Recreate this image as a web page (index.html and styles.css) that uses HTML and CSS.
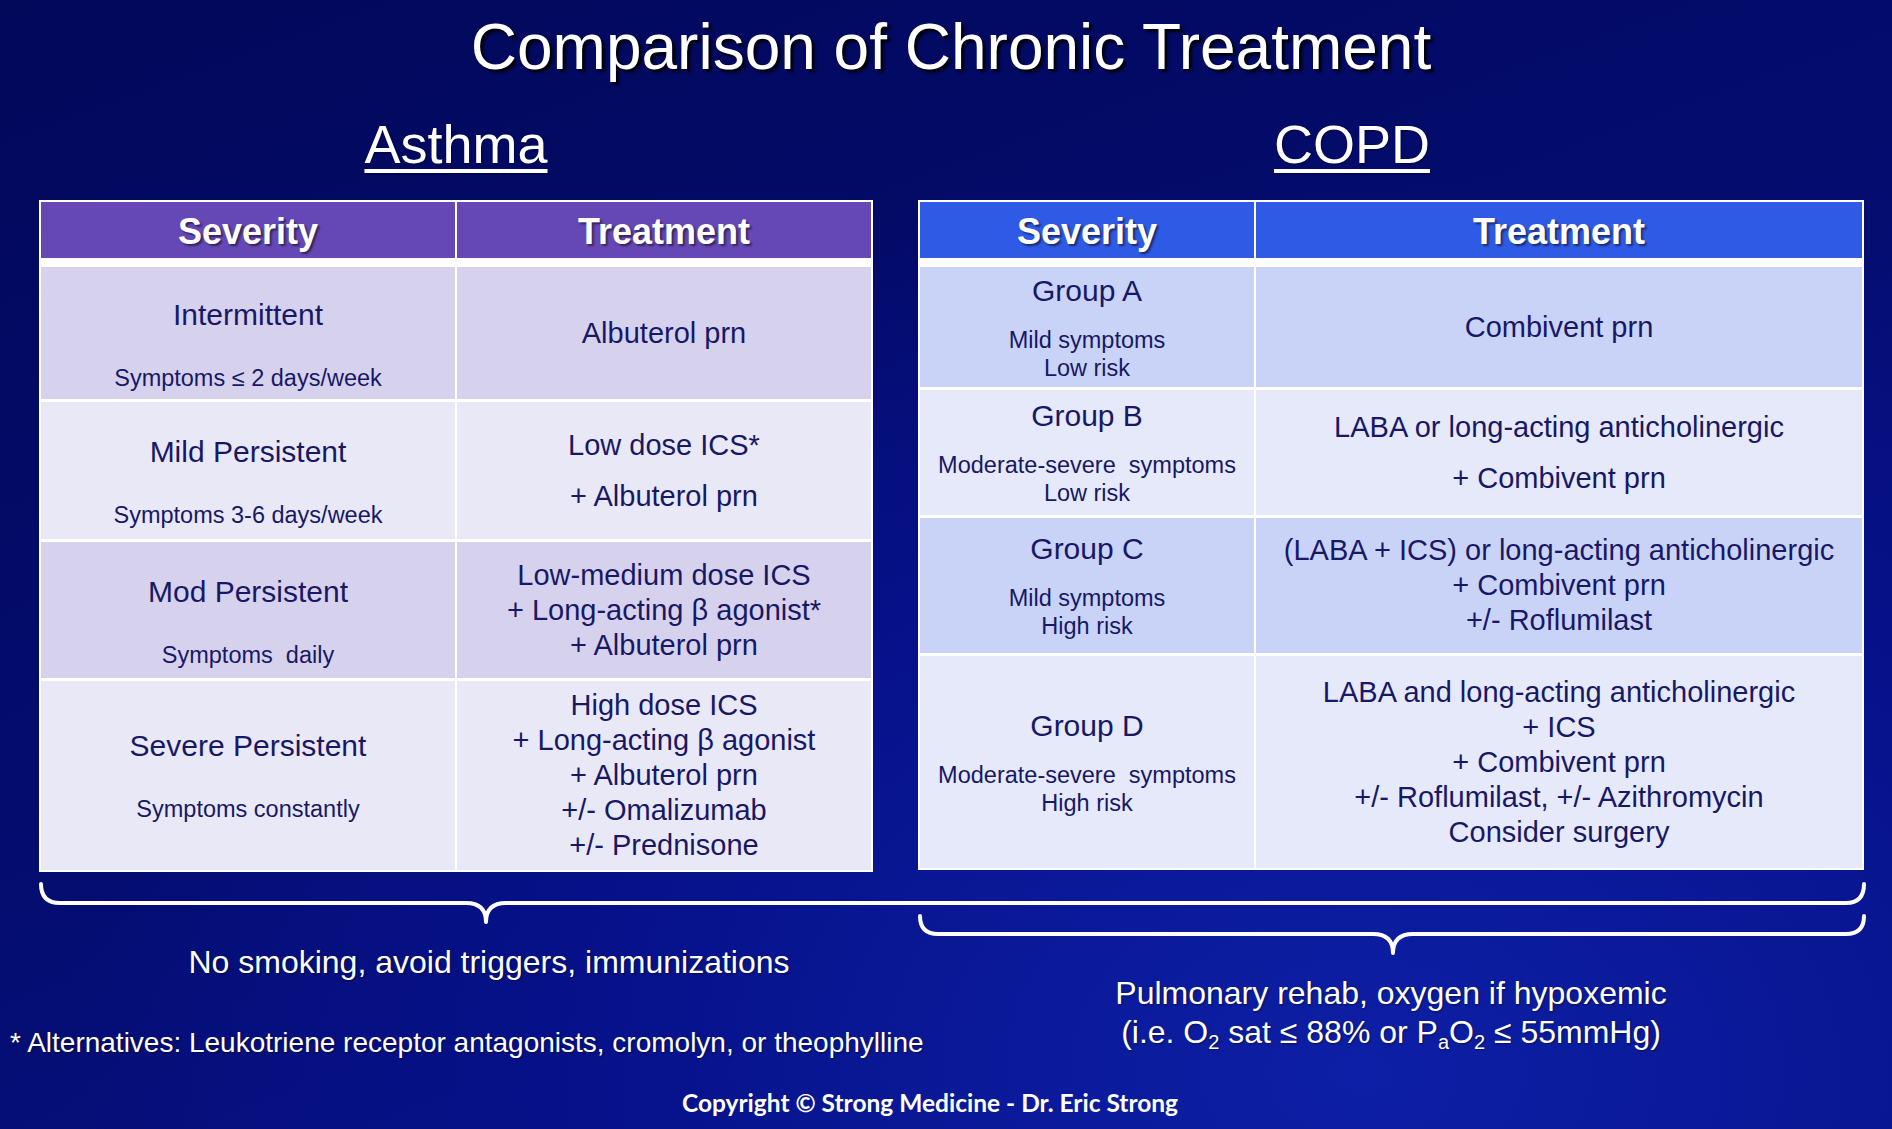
FILE: index.html
```html
<!DOCTYPE html>
<html lang="en">
<head>
<meta charset="utf-8">
<title>Comparison of Chronic Treatment</title>
<link rel="stylesheet" href="styles.css">
</head>
<body>
<div class="slide">
  <h1 class="title">Comparison of Chronic Treatment</h1>

  <div class="columns">
    <section class="col">
      <h2 class="heading">Asthma</h2>
      <div class="tbl asthma">
        <div class="th">Severity</div>
        <div class="th">Treatment</div>

        <div class="td dark sev shift"><div class="name">Intermittent</div><div class="sub">Symptoms ≤ 2 days/week</div></div>
        <div class="td dark"><div class="tx">Albuterol prn</div></div>

        <div class="td light sev shift"><div class="name">Mild Persistent</div><div class="sub">Symptoms 3-6 days/week</div></div>
        <div class="td light"><div class="tx">Low dose ICS*</div><div class="tx para">+ Albuterol prn</div></div>

        <div class="td dark sev shift"><div class="name">Mod Persistent</div><div class="sub">Symptoms&nbsp; daily</div></div>
        <div class="td dark"><div class="tx">Low-medium dose ICS</div><div class="tx">+ Long-acting β agonist*</div><div class="tx">+ Albuterol prn</div></div>

        <div class="td light sev"><div class="name">Severe Persistent</div><div class="sub">Symptoms constantly</div></div>
        <div class="td light"><div class="tx">High dose ICS</div><div class="tx">+ Long-acting β agonist</div><div class="tx">+ Albuterol prn</div><div class="tx">+/- Omalizumab</div><div class="tx">+/- Prednisone</div></div>
      </div>
    </section>

    <section class="col">
      <h2 class="heading copd-heading">COPD</h2>
      <div class="tbl copd">
        <div class="th">Severity</div>
        <div class="th">Treatment</div>

        <div class="td dark sev"><div class="name">Group A</div><div class="sub">Mild symptoms</div><div class="sub">Low risk</div></div>
        <div class="td dark"><div class="tx">Combivent prn</div></div>

        <div class="td light sev"><div class="name">Group B</div><div class="sub">Moderate-severe&nbsp; symptoms</div><div class="sub">Low risk</div></div>
        <div class="td light"><div class="tx">LABA or long-acting anticholinergic</div><div class="tx para">+ Combivent prn</div></div>

        <div class="td dark sev"><div class="name">Group C</div><div class="sub">Mild symptoms</div><div class="sub">High risk</div></div>
        <div class="td dark"><div class="tx">(LABA + ICS) or long-acting anticholinergic</div><div class="tx">+ Combivent prn</div><div class="tx">+/- Roflumilast</div></div>

        <div class="td light sev"><div class="name">Group D</div><div class="sub">Moderate-severe&nbsp; symptoms</div><div class="sub">High risk</div></div>
        <div class="td light"><div class="tx">LABA and long-acting anticholinergic</div><div class="tx">+ ICS</div><div class="tx">+ Combivent prn</div><div class="tx">+/- Roflumilast, +/- Azithromycin</div><div class="tx">Consider surgery</div></div>
      </div>
    </section>
  </div>

  <svg class="braces" width="1892" height="72" viewBox="0 0 1892 72">
    <path d="M41 12 Q41 31 60 31 L466 31 Q486 31 486 50 Q486 31 506 31 L1846 31 Q1864 31 1864 12" />
    <path d="M920 44 Q920 62 938 62 L1373 62 Q1393 62 1393 81 Q1393 62 1413 62 L1846 62 Q1864 62 1864 44" />
  </svg>

  <div class="notes">
    <div class="note-left">
      <p class="common">No smoking, avoid triggers, immunizations</p>
      <p class="footnote">* Alternatives: Leukotriene receptor antagonists, cromolyn, or theophylline</p>
    </div>
    <div class="note-right">
      <p class="common">Pulmonary rehab, oxygen if hypoxemic</p>
      <p class="common">(i.e. O<sub>2</sub> sat ≤ 88% or P<sub>a</sub>O<sub>2</sub> ≤ 55mmHg)</p>
    </div>
  </div>

  <p class="copyright">Copyright © Strong Medicine - Dr. Eric Strong</p>
</div>
</body>
</html>
```

FILE: styles.css
```css
* { box-sizing: border-box; }

html, body {
  margin: 0;
  padding: 0;
}

body {
  font-family: "Liberation Sans", Arial, sans-serif;
  background: #030a60;
}

.slide {
  width: 1892px;
  height: 1129px;
  overflow: hidden;
  color: #fff;
  background:
    radial-gradient(ellipse 1300px 900px at 72% 95%, #0d1fa6 0%, #0a1896 35%, #06118a 60%, rgba(4, 12, 100, 0) 100%),
    linear-gradient(160deg, #02085a 0%, #040c6e 45%, #08148a 100%);
}

.title {
  margin: 0;
  padding: 15px 0 0 10px;
  font-size: 64px;
  line-height: 64px;
  font-weight: normal;
  text-align: center;
  text-shadow: 3px 3px 3px rgba(0, 0, 0, 0.9);
}

.columns {
  display: grid;
  grid-template-columns: 834px 946px;
  column-gap: 45px;
  margin: 38px 0 0 39px;
  align-items: start;
}

.col {
  display: flex;
  flex-direction: column;
}

.heading {
  margin: 0;
  height: 54px;
  font-size: 54px;
  line-height: 54px;
  font-weight: normal;
  text-align: center;
  text-decoration: underline;
  text-decoration-thickness: 4px;
  text-underline-offset: 6px;
  text-shadow: 1px 1px 2px rgba(0, 0, 0, 0.4);
}

.copd-heading {
  padding-right: 78px;
}

.tbl {
  margin-top: 29px;
  display: grid;
  border: 2px solid #fff;
  background: #fff;
  row-gap: 3px;
  column-gap: 2px;
  color: #181866;
}

.asthma {
  width: 834px;
  grid-template-columns: 1fr 1fr;
  grid-template-rows: 62px 132px 137px 136px 189px;
}

.copd {
  width: 946px;
  grid-template-columns: 334px 1fr;
  grid-template-rows: 62px 120px 125px 135px 212px;
}

.th {
  display: flex;
  align-items: center;
  justify-content: center;
  padding-top: 4px;
  border-bottom: 6px solid #fff;
  font-size: 36px;
  font-weight: bold;
  color: #fff;
  text-shadow: 2px 2px 2px rgba(0, 0, 0, 0.5);
}

.asthma .th { background: #6547b6; }
.copd .th { background: #2e5ae6; }

.td {
  display: flex;
  flex-direction: column;
  align-items: center;
  justify-content: center;
  text-align: center;
}

.asthma .dark { background: #d6d2ee; }
.asthma .light { background: #e9e8f6; }
.copd .dark { background: #c9d3f8; }
.copd .light { background: #e5e9fa; }

.name {
  font-size: 30px;
  line-height: 36px;
}

.asthma .name { margin-bottom: 31px; }
.copd .name { margin-bottom: 17px; }

.shift { padding-top: 22px; }

.sub {
  font-size: 23.5px;
  line-height: 28px;
}

.tx {
  font-size: 29px;
  line-height: 35px;
  white-space: nowrap;
}

.tx.para { margin-top: 16px; }

.braces {
  display: block;
  overflow: visible;
}

.braces path {
  fill: none;
  stroke: #fff;
  stroke-width: 4;
  stroke-linejoin: round;
  stroke-linecap: round;
}

.notes {
  display: grid;
  grid-template-columns: 978px 914px;
}

.notes p { margin: 0; }

.common {
  font-size: 32px;
  line-height: 36px;
  text-shadow: 1px 1px 2px rgba(0, 0, 0, 0.45);
}

.note-left .common {
  text-align: center;
}

.footnote {
  margin-top: 46px !important;
  padding-left: 10px;
  font-size: 28px;
  line-height: 34px;
  text-shadow: 1px 1px 2px rgba(0, 0, 0, 0.45);
}

.note-right {
  padding: 30px 88px 0 0;
  text-align: center;
}

.note-right .common { line-height: 39px; }

sub {
  font-size: 20px;
  line-height: 0;
  vertical-align: -6px;
}

.copyright {
  margin: 29px 0 0;
  padding-right: 32px;
  text-align: center;
  font-family: Lato, "Open Sans", sans-serif;
  font-weight: bold;
  font-size: 24.5px;
  line-height: 28px;
}
```
